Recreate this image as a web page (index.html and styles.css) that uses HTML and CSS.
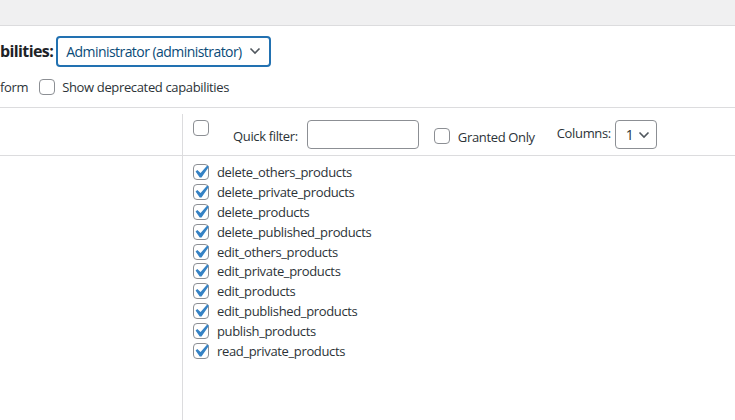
FILE: index.html
```html
<!DOCTYPE html>
<html>
<head>
<meta charset="utf-8">
<link rel="stylesheet" href="styles.css">
</head>
<body>
<div class="topbar"></div>
<div class="head">
  <div class="row1">
    <span class="title">bilities:</span>
    <div class="select role">
      <span class="val">Administrator (administrator)</span>
      <svg class="chev" viewBox="0 0 12 8" width="12" height="8"><path d="M1.5 1.5 L6 6 L10.5 1.5" fill="none" stroke="#50575e" stroke-width="1.6"/></svg>
    </div>
  </div>
  <div class="row2">
    <span class="t form">form</span>
    <span class="cb"></span>
    <span class="t">Show deprecated capabilities</span>
  </div>
</div>
<div class="table">
  <div class="left-h"></div>
  <div class="right-h">
    <span class="cb"></span>
    <span class="lbl qf">Quick filter:</span>
    <span class="input"></span>
    <span class="cb granted"></span>
    <span class="lbl go">Granted Only</span>
    <span class="lbl cols">Columns:</span>
    <div class="select small">
      <span>1</span>
      <svg class="chev" viewBox="0 0 12 8" width="12" height="8"><path d="M1.5 1.5 L6 6 L10.5 1.5" fill="none" stroke="#50575e" stroke-width="1.6"/></svg>
    </div>
  </div>
  <div class="left-b"></div>
  <div class="right-b">
    <ul class="caps">
      <li><span class="cb on"><svg viewBox="3 3 14 14"><path d="M14.83 4.89l1.34.94-5.81 8.38H9.02L5.78 9.67l1.34-1.25 2.57 2.4z"/></svg></span>delete_others_products</li>
      <li><span class="cb on"><svg viewBox="3 3 14 14"><path d="M14.83 4.89l1.34.94-5.81 8.38H9.02L5.78 9.67l1.34-1.25 2.57 2.4z"/></svg></span>delete_private_products</li>
      <li><span class="cb on"><svg viewBox="3 3 14 14"><path d="M14.83 4.89l1.34.94-5.81 8.38H9.02L5.78 9.67l1.34-1.25 2.57 2.4z"/></svg></span>delete_products</li>
      <li><span class="cb on"><svg viewBox="3 3 14 14"><path d="M14.83 4.89l1.34.94-5.81 8.38H9.02L5.78 9.67l1.34-1.25 2.57 2.4z"/></svg></span>delete_published_products</li>
      <li><span class="cb on"><svg viewBox="3 3 14 14"><path d="M14.83 4.89l1.34.94-5.81 8.38H9.02L5.78 9.67l1.34-1.25 2.57 2.4z"/></svg></span>edit_others_products</li>
      <li><span class="cb on"><svg viewBox="3 3 14 14"><path d="M14.83 4.89l1.34.94-5.81 8.38H9.02L5.78 9.67l1.34-1.25 2.57 2.4z"/></svg></span>edit_private_products</li>
      <li><span class="cb on"><svg viewBox="3 3 14 14"><path d="M14.83 4.89l1.34.94-5.81 8.38H9.02L5.78 9.67l1.34-1.25 2.57 2.4z"/></svg></span>edit_products</li>
      <li><span class="cb on"><svg viewBox="3 3 14 14"><path d="M14.83 4.89l1.34.94-5.81 8.38H9.02L5.78 9.67l1.34-1.25 2.57 2.4z"/></svg></span>edit_published_products</li>
      <li><span class="cb on"><svg viewBox="3 3 14 14"><path d="M14.83 4.89l1.34.94-5.81 8.38H9.02L5.78 9.67l1.34-1.25 2.57 2.4z"/></svg></span>publish_products</li>
      <li><span class="cb on"><svg viewBox="3 3 14 14"><path d="M14.83 4.89l1.34.94-5.81 8.38H9.02L5.78 9.67l1.34-1.25 2.57 2.4z"/></svg></span>read_private_products</li>
    </ul>
  </div>
</div>
</body>
</html>
```
FILE: styles.css
```css
html, body {
  margin: 0;
  padding: 0;
  background: #fff;
  height: 100%;
  overflow: hidden;
}
body {
  font-family: "Open Sans", "Noto Sans", "Liberation Sans", sans-serif;
  font-size: 13px;
  color: #2c3338;
  display: flex;
  flex-direction: column;
}
.topbar {
  height: 25px;
  background: #f0f0f1;
  border-bottom: 1px solid #dcdcde;
  flex: none;
}
.head {
  padding: 10px 0 10px 0;
  border-bottom: 1px solid #dcdcde;
  flex: none;
}
.row1 {
  display: flex;
  align-items: center;
  height: 30px;
}
.title {
  font-size: 16px;
  font-weight: 700;
  color: #1d2327;
  letter-spacing: -0.6px;
  white-space: nowrap;
  margin-right: 3px;
}
.select {
  box-sizing: border-box;
  display: flex;
  align-items: center;
  border-radius: 4px;
  background: #fff;
}
.role {
  width: 215px;
  height: 31px;
  border: 2px solid #2271b1;
  padding: 0 8px 0 8px;
  font-size: 14px;
  color: #0a4b78;
  justify-content: space-between;
}
.val {
  white-space: nowrap;
  letter-spacing: -0.55px;
}
.row2 {
  display: flex;
  align-items: center;
  height: 20px;
  margin-top: 11px;
}
.form { margin-right: 11px; }
.row2 > .cb { margin-right: 7px; }
.t { letter-spacing: -0.35px; white-space: nowrap; }
.cb {
  box-sizing: border-box;
  display: inline-flex;
  align-items: center;
  justify-content: center;
  width: 16px;
  height: 16px;
  border: 1px solid #8c8f94;
  border-radius: 4px;
  background: #fff;
  flex: none;
}
.cb svg {
  width: 18px;
  height: 18px;
  fill: #3582c4;
  margin: -2px;
}
.table {
  margin-top: 6px;
  flex: 1;
  display: grid;
  grid-template-columns: 183px 1fr;
  grid-template-rows: 42px 1fr;
}
.left-h, .left-b {
  border-right: 1px solid #dcdcde;
}
.left-h, .right-h {
  border-bottom: 1px solid #dcdcde;
}
.right-h {
  display: flex;
  align-items: center;
  padding: 0 0 0 10px;
  height: 42px;
  box-sizing: border-box;
}
.right-h > .cb:first-child {
  align-self: flex-start;
  margin-top: 6px;
}
.lbl { white-space: nowrap; letter-spacing: -0.35px; color: #2c3338; }
.qf { margin-left: 24px; margin-right: 9px; margin-top: 2px; }
.input {
  box-sizing: border-box;
  width: 112px;
  height: 29px;
  border: 1px solid #8c8f94;
  border-radius: 4px;
  background: #fff;
}
.granted { margin-left: 15px; margin-right: 8px; margin-top: 2px; }
.go { margin-top: 4px; }
.cols { margin-left: 22px; margin-right: 4px; margin-bottom: 3px; }
.small {
  width: 42px;
  height: 29px;
  border: 1px solid #8c8f94;
  padding: 0 6px 0 10px;
  justify-content: space-between;
  font-size: 14px;
  color: #2c3338;
}
.caps {
  list-style: none;
  margin: 0;
  padding: 6px 0 0 10px;
}
.caps li {
  display: flex;
  align-items: center;
  height: 19.9px;
  white-space: nowrap;
  letter-spacing: -0.35px;
}
.caps .cb { margin-right: 8px; }
```
